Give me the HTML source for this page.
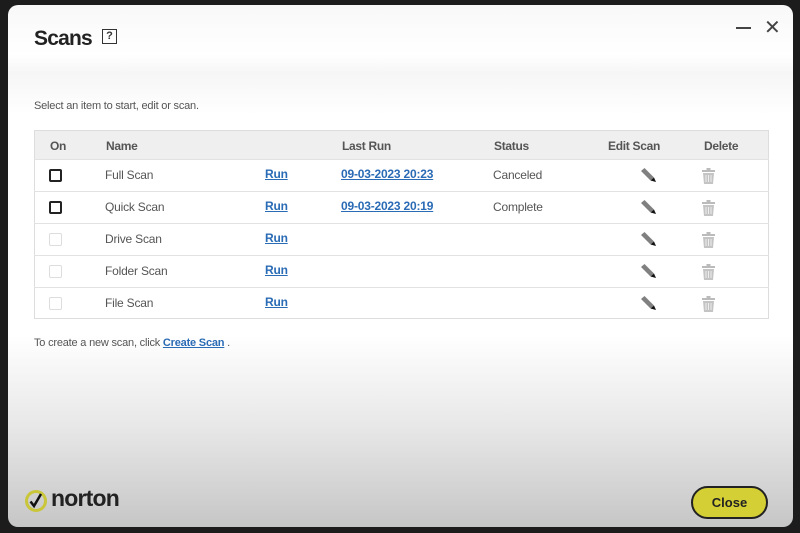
<!DOCTYPE html>
<html><head><style>
*{margin:0;padding:0;box-sizing:border-box}
body{width:800px;height:533px;background:#1c1c1c;font-family:"Liberation Sans",sans-serif;position:relative;overflow:hidden}
.win{position:absolute;left:8px;top:5px;width:785px;height:522px;border-radius:10px;background:linear-gradient(#f8f8f8 0px,#fff 50px,#f6f6f6 68px,#fff 110px,#fff 330px,#e8e8e8 420px,#c6c6c6 522px);overflow:hidden}
.t{position:absolute;white-space:nowrap}
.title{left:26px;top:22px;font-size:21px;font-weight:bold;color:#222;letter-spacing:-0.8px}
.q{left:94px;top:24px;width:15px;height:15px;border:1.5px solid #333;font-size:11px;text-align:center;line-height:12px;font-weight:bold;color:#333}
.table{position:absolute;left:26px;top:125px;width:735px;height:189px;background:#fff;border:1px solid #ddd}
.hdr{position:absolute;left:0;top:0;width:100%;height:29px;background:#efefef}
.row{position:absolute;left:0;width:100%;height:32px;border-top:1px solid #e2e2e2}
.h{font-size:12px;font-weight:bold;color:#555;top:8px;letter-spacing:-0.3px}
.c{font-size:12px;color:#555;letter-spacing:-0.2px}
.l{font-size:12px;font-weight:bold;color:#2a6bb5;text-decoration:underline;letter-spacing:-0.2px}
.cb{position:absolute;left:15px;width:13px;height:13px;border:2px solid #222;border-radius:2px}
.cb.g{border:1px solid #ddd}
</style></head><body>
<div class="win">
<div class="t title">Scans</div>
<div class="t q">?</div>
<div class="t" style="left:728px;top:22px;width:15px;height:2px;background:#444"></div>
<div class="t" style="left:756px;top:10px;font-size:20px;color:#444">✕</div>
<div class="t c" style="left:26px;top:95px;font-size:11px">Select an item to start, edit or scan.</div>
<div class="table">
<div class="hdr"></div>
<div class="t h" style="left:15px">On</div>
<div class="t h" style="left:71px">Name</div>
<div class="t h" style="left:307px">Last Run</div>
<div class="t h" style="left:459px">Status</div>
<div class="t h" style="left:573px">Edit Scan</div>
<div class="t h" style="left:669px">Delete</div>
</div>
<div class="t c" style="left:26px;top:332px;font-size:11px">To create a new scan, click <span class="l" style="font-size:11px">Create Scan</span> .</div>
<svg class="t" style="left:16px;top:484px" width="24" height="24" viewBox="0 0 24 24"><circle cx="12" cy="12" r="9.5" fill="none" stroke="#c9c63a" stroke-width="3"/><path d="M6.5 12.5 L10 17 L17 5" fill="none" stroke="#111" stroke-width="2.5"/></svg>
<div class="t" style="left:43px;top:480px;font-size:23px;font-weight:bold;color:#222;letter-spacing:-0.8px">norton</div>
<div class="t" style="left:683px;top:481px;width:77px;height:33px;border:2px solid #222;border-radius:17px;background:#d4cf34;font-size:13px;font-weight:bold;text-align:center;line-height:29px;color:#222">Close</div>
</div>
<script>
var r=[["Full Scan","09-03-2023 20:23","Canceled",1],["Quick Scan","09-03-2023 20:19","Complete",1],["Drive Scan","","",0],["Folder Scan","","",0],["File Scan","","",0]];
var h="";
r.forEach(function(x,i){var y=159+i*32-5;
h+='<div class="row" style="position:absolute;left:26px;width:735px;top:'+(y)+'px"></div>';
h+='<div class="cb '+(x[3]?'':'g')+'" style="left:41px;top:'+(y+10)+'px"></div>';
h+='<div class="t c" style="left:97px;top:'+(y+9)+'px">'+x[0]+'</div>';
h+='<div class="t l" style="left:257px;top:'+(y+8)+'px">Run</div>';
if(x[1])h+='<div class="t l" style="left:333px;top:'+(y+8)+'px">'+x[1]+'</div>';
if(x[2])h+='<div class="t c" style="left:485px;top:'+(y+9)+'px">'+x[2]+'</div>';
h+='<svg class="t" style="left:632px;top:'+(y+8)+'px" width="17" height="16" viewBox="0 0 17 16"><path d="M1 4 L4.5 1 L14 10.5 L10.5 13.5 Z" fill="#808080"/><path d="M10.5 13.5 L14 10.5 L16 15 Z" fill="#111"/></svg>';
h+='<svg class="t" style="left:693px;top:'+(y+9)+'px" width="15" height="16" viewBox="0 0 15 16"><rect x="1" y="2" width="13" height="2" fill="#bbb"/><rect x="5.5" y="0" width="4" height="2" fill="#bbb"/><path d="M2 5 H13 L12 16 H3Z" fill="#c4c4c4"/><path d="M5 7V14M7.5 7V14M10 7V14" stroke="#eee"/></svg>';
});
document.querySelector('.win').insertAdjacentHTML('beforeend',h);
</script>
</body></html>
